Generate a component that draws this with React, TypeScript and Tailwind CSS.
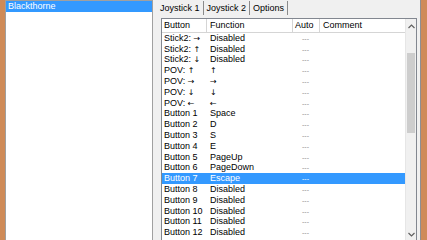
import React from 'react';

const rows: [string, string, boolean?][] = [
    ['Stick2: →', 'Disabled'],
    ['Stick2: ↑', 'Disabled'],
    ['Stick2: ↓', 'Disabled'],
    ['POV: ↑', '↑'],
    ['POV: →', '→'],
    ['POV: ↓', '↓'],
    ['POV: ←', '←'],
    ['Button 1', 'Space'],
    ['Button 2', 'D'],
    ['Button 3', 'S'],
    ['Button 4', 'E'],
    ['Button 5', 'PageUp'],
    ['Button 6', 'PageDown'],
    ['Button 7', 'Escape', true],
    ['Button 8', 'Disabled'],
    ['Button 9', 'Disabled'],
    ['Button 10', 'Disabled'],
    ['Button 11', 'Disabled'],
    ['Button 12', 'Disabled'],
];

// arrows go through DejaVu so they don't pick up the emoji font
const Label: React.FC<{ text: string }> = ({ text }) => (
    <>
        {text.split(/([←↑→↓])/).map((part, i) =>
            /[←↑→↓]/.test(part)
                ? <span key={i} className="text-[8px]" style={{ fontFamily: '"DejaVu Sans", sans-serif' }}>{part + '\uFE0E'}</span>
                : <span key={i}>{part}</span>
        )}
    </>
);

const App: React.FC = () => {
    return (
        <div className="flex w-[427px] h-[240px] overflow-hidden bg-[#f0f0f0] text-[9px] leading-none text-black" style={{ fontFamily: '"Liberation Sans", Arial, sans-serif' }}>
            {/* window frame left */}
            <div className="w-[5px] h-full bg-[#cf8b58]"></div>

            {/* game list */}
            <div className="w-[148px] h-full border border-b-0 border-[#a0a0a0] bg-white">
                <div className="h-[11px] bg-[#3399ff] text-white pl-[2px] flex items-center">Blackthorne</div>
            </div>

            {/* mapping panel */}
            <div className="flex-1 flex flex-col pl-[7px] min-w-0">
                <div className="h-[18px] flex items-center pb-[2px]">
                    <span className="pr-[3px]">Joystick 1</span>
                    <span className="w-px h-[14px] bg-[#8a8a8a]"></span>
                    <span className="px-[3px]">Joystick 2</span>
                    <span className="w-px h-[14px] bg-[#8a8a8a]"></span>
                    <span className="px-[3px]">Options</span>
                    <span className="w-px h-[14px] bg-[#8a8a8a]"></span>
                </div>

                <div className="flex-1 flex border border-b-0 border-[#828790] bg-white min-h-0 ml-px">
                    <div className="flex-1 flex flex-col min-w-0">
                        <div className="h-[14px] flex border-b border-[#d5d5d5]">
                            <div className="w-[45px] pl-[2px] flex items-center border-r border-[#d5d5d5]">Button</div>
                            <div className="w-[86px] pl-[3px] flex items-center border-r border-[#d5d5d5]">Function</div>
                            <div className="w-[27px] pl-[2px] flex items-center border-r border-[#d5d5d5]">Auto</div>
                            <div className="flex-1 pl-[3px] flex items-center">Comment</div>
                        </div>
                        {rows.map(([btn, fn, sel]) => (
                            <div key={btn} className={`h-[10.8px] flex items-center whitespace-pre ${sel ? 'bg-[#3399ff] text-white' : ''}`}>
                                <div className="w-[45px] pl-[2px]"><Label text={btn} /></div>
                                <div className="w-[86px] pl-[3px]"><Label text={fn} /></div>
                                <div className={`w-[27px] pl-[9px] text-[7px] ${sel ? 'text-white' : 'text-[#909090]'}`}>---</div>
                            </div>
                        ))}
                    </div>

                    {/* scrollbar */}
                    <div className="w-[11px] flex flex-col bg-[#f0f0f0] border-l border-[#e6e6e6]">
                        <div className="h-[14px] flex items-center justify-center">
                            <svg width="7" height="5" viewBox="0 0 7 5"><path d="M0.5 4 L3.5 1 L6.5 4" fill="none" stroke="#606060" strokeWidth="1.2" /></svg>
                        </div>
                        <div className="h-[20px]"></div>
                        <div className="h-[80px] mx-[1px] bg-[#cdcdcd]"></div>
                        <div className="flex-1"></div>
                        <div className="h-[12px] flex items-center justify-center">
                            <svg width="7" height="5" viewBox="0 0 7 5"><path d="M0.5 1 L3.5 4 L6.5 1" fill="none" stroke="#606060" strokeWidth="1.2" /></svg>
                        </div>
                    </div>
                </div>
            </div>

            {/* window frame right */}
            <div className="w-[3px] h-full"></div>
            <div className="w-px h-full bg-[#8f8f8f]"></div>
            <div className="w-[6px] h-full bg-[#cf8b58]"></div>
        </div>
    );
};

export default App;
